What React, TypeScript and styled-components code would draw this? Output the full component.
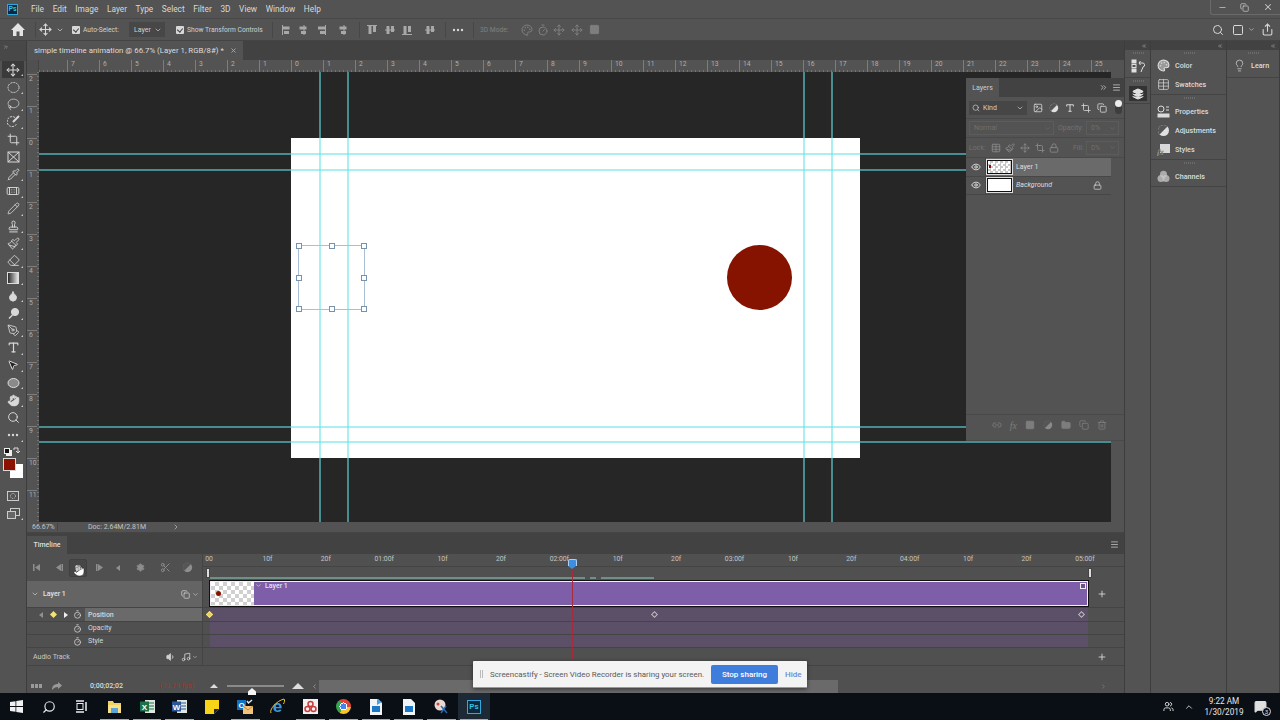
import React from 'react';
import styled, { createGlobalStyle } from 'styled-components';
import {
  Bandage, ChevronDown, ChevronLeft, ChevronRight, ChevronUp, ChevronsLeft, ChevronsRight, Crop, Droplet, Eraser,
  Eye, Folder, Hand, Lasso, Layers, Lightbulb, Link2, Lock, Menu, Move, Music, Palette, PenTool,
  Pencil, Pipette, Plus, Scissors, Search, Settings, Share, Square, Stamp, Table, Timer, Trash2,
  Type, Users, Volume1, X, Minus, Copy, MessageSquare, MousePointer2, Image as ImageIcon, Paintbrush,
} from 'lucide-react';

const GlobalStyle = createGlobalStyle`
  html, body { margin: 0; padding: 0; background: #535353; }
  * { box-sizing: border-box; }
  body { font-family: Roboto, "Liberation Sans", sans-serif; }
`;

const Page = styled.div`
  width: 1280px;
  height: 720px;
  display: flex;
  flex-direction: column;
  overflow: hidden;
  background: #535353;
  color: #d6d6d6;
`;

/* ---------- top bars ---------- */
const MenuBar = styled.div`
  height: 19px;
  display: flex;
  align-items: center;
  padding-left: 7px;
  background: #535353;
  border-bottom: 1px solid #484848;
  font-size: 8.3px;
  color: #d8d8d8;
`;
const PsMark = styled.div<{ $task?: boolean }>`
  width: ${({ $task }) => ($task ? 14 : 11)}px;
  height: ${({ $task }) => ($task ? 14 : 11)}px;
  margin-right: ${({ $task }) => ($task ? 0 : 13)}px;
  border: 1px solid #31a8e0;
  background: #0d2a3d;
  color: #31c5f0;
  font-size: ${({ $task }) => ($task ? 8 : 7)}px;
  line-height: ${({ $task }) => ($task ? 12 : 9)}px;
  text-align: center;
  font-weight: 600;
`;
const MenuItem = styled.span`
  margin-right: 8.6px;
`;
const WindowButtons = styled.div`
  margin-left: auto;
  width: 70px;
  height: 15px;
  align-self: flex-start;
  display: flex;
  align-items: center;
  justify-content: space-around;
  border: 1px solid #6a6a6a;
  border-top: 0;
  border-right: 0;
  border-bottom-left-radius: 3px;
  color: #c8c8c8;
`;
const OptionsBar = styled.div`
  height: 22px;
  display: flex;
  align-items: center;
  background: #535353;
  border-bottom: 1px solid #444;
  font-size: 6.7px;
  color: #d0d0d0;
`;
const HomeCell = styled.div`
  width: 35px;
  flex: none;
  display: flex;
  justify-content: center;
  color: #e4e4e4;
`;
const MoveCell = styled.div`
  width: 34px;
  flex: none;
  display: flex;
  align-items: center;
  color: #d8d8d8;
`;
const DimGroup = styled.div`
  display: flex;
  align-items: center;
  margin-left: 6px;
  opacity: 0.35;
`;
const OptSep = styled.div<{ $ml?: number }>`
  width: 1px;
  height: 16px;
  flex: none;
  margin-left: ${({ $ml }) => $ml || 0}px;
  background: #474747;
`;
const Check = styled.div<{ $ml: number }>`
  width: 8px;
  height: 8px;
  margin: 0 3px 0 ${({ $ml }) => $ml}px;
  border-radius: 1px;
  background: #d8d8d8;
  position: relative;
  &::after {
    content: '';
    position: absolute;
    left: 2px;
    top: 1px;
    width: 3px;
    height: 4px;
    border: solid #444;
    border-width: 0 1px 1px 0;
    transform: rotate(40deg);
  }
`;
const OptLabel = styled.span<{ $w: number }>`
  width: ${({ $w }) => $w}px;
  flex: none;
  white-space: nowrap;
`;
const LayerSelect = styled.div`
  width: 36px;
  height: 15px;
  margin-left: 10px;
  background: #474747;
  display: flex;
  align-items: center;
  justify-content: space-between;
  padding: 0 3px 0 5px;
  font-size: 7px;
`;
const IconSlot = styled.div<{ $ml?: number; $mr?: number; $color?: string }>`
  margin-left: ${({ $ml }) => $ml || 0}px;
  margin-right: ${({ $mr }) => $mr || 0}px;
  display: flex;
  flex: none;
  color: ${({ $color }) => $color || 'inherit'};
`;
const TopRight = styled.div`
  margin-left: auto;
  display: flex;
  align-items: center;
  gap: 8px;
  padding-right: 6px;
  color: #d8d8d8;
`;

/* ---------- workspace ---------- */
const Workspace = styled.div`
  flex: 1;
  display: flex;
  min-height: 0;
`;
const ToolColumn = styled.div`
  width: 27px;
  flex: none;
  display: flex;
  flex-direction: column;
  border-right: 1px solid #3d3d3d;
  background: #535353;
`;
const ToolHead = styled.div`
  height: 20px;
  flex: none;
  background: #484848;
  color: #aaa;
  padding: 3px 0 0 3px;
  display: flex;
  align-items: flex-start;
`;
const ToolBtn = styled.div<{ $active?: boolean; $more?: boolean }>`
  height: 17.4px;
  width: 22px;
  margin-left: 2px;
  flex: none;
  display: flex;
  align-items: center;
  justify-content: center;
  position: relative;
  color: #d8d8d8;
  background: ${({ $active }) => ($active ? '#3a3a3a' : 'transparent')};
  &::after {
    content: '';
    display: ${({ $more }) => ($more ? 'block' : 'none')};
    position: absolute;
    right: 1px;
    bottom: 2px;
    border-left: 2px solid transparent;
    border-bottom: 2px solid #ccc;
  }
`;
const DefaultsRow = styled.div`
  height: 13px;
  flex: none;
  display: flex;
  align-items: center;
  justify-content: space-between;
  padding: 0 5px 0 4px;
  margin-top: 1px;
`;
const MiniSwatch = styled.div`
  width: 6px;
  height: 6px;
  background: #111;
  border: 1px solid #eee;
  box-shadow: 2px 2px 0 #eee;
`;
const ColorStack = styled.div`
  height: 28px;
  flex: none;
  position: relative;
  margin-bottom: 2px;
`;
const ColorChip = styled.div<{ $fg?: boolean }>`
  position: absolute;
  left: ${({ $fg }) => ($fg ? 3 : 10)}px;
  top: ${({ $fg }) => ($fg ? 0 : 6)}px;
  width: 13px;
  height: ${({ $fg }) => ($fg ? 13 : 14)}px;
  background: ${({ $fg }) => ($fg ? '#8b1200' : '#fff')};
  border: 1px solid ${({ $fg }) => ($fg ? '#d8d8d8' : '#fff')};
  z-index: ${({ $fg }) => ($fg ? 2 : 1)};
`;
const Center = styled.div`
  flex: 1;
  min-width: 0;
  display: flex;
  flex-direction: column;
`;
const TabStrip = styled.div`
  height: 19px;
  flex: none;
  background: #424242;
  display: flex;
`;
const DocTab = styled.div`
  width: 216px;
  background: #535353;
  display: flex;
  align-items: center;
  padding-left: 7px;
  gap: 6px;
  font-size: 7.8px;
  color: #dcdcdc;
  white-space: nowrap;
`;
const RulerRow = styled.div`
  height: 12px;
  flex: none;
  display: flex;
`;
const RulerCorner = styled.div`
  width: 12px;
  flex: none;
  background: #505050;
  border-right: 1px solid #444;
`;
const HRail = styled.div`
  width: 1072px;
  flex: none;
  display: flex;
  overflow: hidden;
  padding-left: 28px;
  background-color: #535353;
  background-image: repeating-linear-gradient(90deg, #747474 0 1px, transparent 1px 4px);
  background-size: 100% 2px;
  background-position: 0 100%;
  background-repeat: no-repeat;
`;
const HCell = styled.div`
  width: 32px;
  flex: none;
  border-left: 1px solid #7d7d7d;
  padding-left: 3px;
  font-size: 6.8px;
  line-height: 9px;
  color: #aeaeae;
`;
const BodyRow = styled.div`
  height: 450px;
  flex: none;
  display: flex;
`;
const VRail = styled.div`
  width: 12px;
  flex: none;
  overflow: hidden;
  padding-top: 2px;
  background-color: #535353;
  background-image: repeating-linear-gradient(180deg, #747474 0 1px, transparent 1px 4px);
  background-size: 2px 100%;
  background-position: 100% 0;
  background-repeat: no-repeat;
`;
const VCell = styled.div`
  height: 32px;
  border-top: 1px solid #7d7d7d;
  padding: 1px 0 0 2px;
  width: 10px;
  font-size: 6.8px;
  line-height: 7px;
  color: #aeaeae;
  word-break: break-all;
`;
const Canvas = styled.div`
  width: 1072px;
  flex: none;
  position: relative;
  background: #262626;
  display: flex;
  align-items: center;
  justify-content: center;
  padding: 2px 0 0 1px;
`;
const Doc = styled.div`
  width: 569px;
  height: 320px;
  background: #fff;
  position: relative;
`;
const Ball = styled.div`
  position: absolute;
  left: 436px;
  top: 107px;
  width: 65px;
  height: 65px;
  border-radius: 50%;
  background: #861300;
`;
const SelectBox = styled.div`
  position: absolute;
  left: 7px;
  top: 107px;
  width: 67px;
  height: 65px;
  border: 1px solid #a9bfd6;
`;
const Handle = styled.div<{ $x: number; $y: number }>`
  position: absolute;
  left: ${({ $x }) => $x}%;
  top: ${({ $y }) => $y}%;
  width: 6px;
  height: 6px;
  margin: -3px;
  background: #fff;
  border: 1px solid #7592b0;
`;
const Guide = styled.div<{ $v?: boolean; $at: number }>`
  position: absolute;
  background: rgba(100, 225, 230, 0.55);
  ${({ $v, $at }) =>
    $v
      ? `left:${$at}px; top:0; bottom:0; width:2px;`
      : `top:${$at}px; left:0; right:0; height:2px;`}
`;
const ScrollGutter = styled.div`
  flex: 1;
  background: #535353;
`;
const StatusBar = styled.div`
  height: 11px;
  flex: none;
  display: flex;
  align-items: center;
  background: #535353;
  font-size: 7px;
  color: #c4c4c4;
  border-bottom: 1px solid #454545;
`;
const ZoomBox = styled.div`
  width: 31px;
  padding-left: 5px;
  border-right: 1px solid #454545;
  flex: none;
`;
const DocInfo = styled.div`
  margin-left: 30px;
  width: 84px;
  flex: none;
  white-space: nowrap;
`;

/* ---------- layers panel ---------- */
const LayersPanel = styled.div`
  position: absolute;
  left: 927px;
  top: 6px;
  width: 158px;
  height: 363px;
  display: flex;
  flex-direction: column;
  background: #535353;
  border-bottom: 1px solid #4a4a4a;
  z-index: 3;
  font-size: 7px;
  color: #d4d4d4;
`;
const PanelTabs = styled.div`
  height: 19px;
  flex: none;
  display: flex;
  align-items: center;
  background: #424242;
  color: #ccc;
  padding-right: 3px;
`;
const PanelTab = styled.div`
  width: 33px;
  height: 100%;
  background: #535353;
  margin-right: auto;
  display: flex;
  align-items: center;
  justify-content: center;
`;
const PanelRow = styled.div<{ $h: number; $line?: boolean }>`
  height: ${({ $h }) => $h}px;
  flex: none;
  display: flex;
  align-items: center;
  padding: 0 0 0 3px;
  border-bottom: ${({ $line }) => ($line ? '1px solid #494949' : '0')};
  color: #d0d0d0;
`;
const KindSelect = styled.div`
  width: 58px;
  height: 14px;
  flex: none;
  background: #464646;
  display: flex;
  align-items: center;
  gap: 3px;
  padding: 0 3px;
  margin-right: 3px;
`;
const KindChevron = styled(ChevronDown)`
  margin-left: auto;
`;
const FilterIcon = styled.div`
  width: 16px;
  flex: none;
  display: flex;
  justify-content: center;
  color: #d4d4d4;
`;
const ToggleSwitch = styled.div`
  width: 7px;
  height: 12px;
  border-radius: 4px;
  background: #3e3e3e;
  position: relative;
  &::after {
    content: '';
    position: absolute;
    left: 0;
    top: -2px;
    width: 7px;
    height: 7px;
    border-radius: 50%;
    background: #eee;
  }
`;
const DimField = styled.div<{ $w: number; $ml?: number }>`
  width: ${({ $w }) => $w}px;
  height: 14px;
  margin-left: ${({ $ml }) => $ml || 0}px;
  flex: none;
  border: 1px solid #5c5c5c;
  color: #6f6f6f;
  display: flex;
  align-items: center;
  justify-content: space-between;
  padding: 0 2px 0 4px;
`;
const DimText = styled.span<{ $w?: number; $ml?: number }>`
  color: #727272;
  width: ${({ $w }) => ($w ? `${$w}px` : 'auto')};
  flex: none;
  margin-left: ${({ $ml }) => $ml || 0}px;
`;
const FxMark = styled.span`
  color: #7d7d7d;
  font-style: italic;
  font-family: "Liberation Serif", serif;
  font-size: 10px;
`;
const LayerList = styled.div`
  flex: 1;
  width: 145px;
  display: flex;
  flex-direction: column;
`;
const LayerRow = styled.div<{ $active?: boolean }>`
  height: 18.5px;
  flex: none;
  display: flex;
  align-items: center;
  background: ${({ $active }) => ($active ? '#6a6a6a' : '#535353')};
  border-bottom: 1px solid #474747;
  font-size: 7px;
  color: #dedede;
`;
const EyeCell = styled.div`
  width: 20px;
  align-self: stretch;
  flex: none;
  background: #535353;
  border-right: 1px solid #474747;
  display: flex;
  align-items: center;
  justify-content: center;
  color: #e8e8e8;
`;
const LayerThumb = styled.div<{ $checker?: boolean }>`
  width: 25px;
  height: 14px;
  margin: 0 4px 0 1px;
  flex: none;
  border: 1px solid #111;
  outline: 1px solid #ddd;
  background-color: #fff;
  background-image: ${({ $checker }) =>
    $checker ? 'repeating-conic-gradient(#c8c8c8 0 25%, #fff 0 50%)' : 'none'};
  background-size: 5px 5px;
  display: flex;
  align-items: center;
  padding-left: 1px;
`;
const ThumbTick = styled.div`
  width: 2px;
  height: 3px;
  background: #8a1200;
`;
const LayerName = styled.span<{ $italic?: boolean }>`
  font-style: ${({ $italic }) => ($italic ? 'italic' : 'normal')};
`;
const LayerLock = styled.div`
  margin-left: auto;
  margin-right: 9px;
  display: flex;
  color: #d0d0d0;
`;
const PanelFoot = styled.div`
  height: 21px;
  flex: none;
  display: flex;
  align-items: center;
  justify-content: flex-end;
  gap: 8px;
  padding-right: 17px;
  color: #7d7d7d;
  border-top: 1px solid #494949;
  margin-bottom: 5px;
`;

/* ---------- right dock ---------- */
const Dock = styled.div`
  width: 156px;
  flex: none;
  display: flex;
  border-left: 1px solid #3d3d3d;
`;
const DockCol = styled.div<{ $w?: number }>`
  width: ${({ $w }) => ($w ? `${$w}px` : 'auto')};
  flex: ${({ $w }) => ($w ? 'none' : '1')};
  display: flex;
  flex-direction: column;
  border-right: 1px solid #3d3d3d;
`;
const DockHead = styled.div`
  height: 9px;
  flex: none;
  background: #424242;
  color: #bcbcbc;
  display: flex;
  justify-content: flex-end;
  align-items: center;
  padding-right: 3px;
`;
const DockGroup = styled.div<{ $h: number; $pt?: number }>`
  height: ${({ $h }) => $h}px;
  flex: none;
  padding-top: ${({ $pt }) => $pt ?? 6}px;
  border-bottom: 1px solid #444;
  position: relative;
  &::before {
    content: '';
    position: absolute;
    top: 2px;
    left: 50%;
    width: 11px;
    margin-left: -5px;
    height: 2px;
    background: repeating-linear-gradient(90deg, #6b6b6b 0 1px, transparent 1px 2px);
  }
`;
const DockEntry = styled.div<{ $pad?: number }>`
  height: 19px;
  display: flex;
  align-items: center;
  gap: 5px;
  padding-left: ${({ $pad }) => $pad ?? 6}px;
  font-size: 7.2px;
  font-weight: 500;
  color: #dcdcdc;
`;
const DockIcon = styled.div<{ $active?: boolean }>`
  width: 18px;
  height: 15px;
  margin: 2px auto 0;
  display: flex;
  align-items: center;
  justify-content: center;
  color: #e0e0e0;
  background: ${({ $active }) => ($active ? '#333' : 'transparent')};
`;

/* ---------- timeline ---------- */
const Timeline = styled.div`
  flex: 1;
  display: flex;
  flex-direction: column;
  min-height: 0;
  background: #505050;
  font-size: 7px;
`;
const TimelineHead = styled.div`
  height: 21px;
  flex: none;
  display: flex;
  align-items: flex-end;
  justify-content: space-between;
  background: #424242;
  padding-right: 5px;
  color: #c8c8c8;
`;
const TimelineTab = styled.div`
  width: 40px;
  height: 18px;
  background: #505050;
  display: flex;
  align-items: center;
  justify-content: center;
  font-weight: 500;
  color: #dedede;
`;
const HeadMenu = styled(Menu)`
  margin-bottom: 5px;
`;
const TimelineBody = styled.div`
  flex: 1;
  position: relative;
  display: flex;
  flex-direction: column;
`;
const TLRow = styled.div<{ $h: number; $line?: boolean }>`
  height: ${({ $h }) => $h}px;
  flex: none;
  display: flex;
  border-bottom: ${({ $line }) => ($line ? '1px solid #444' : '0')};
`;
const TLLeft = styled.div<{ $bg?: string }>`
  width: 176px;
  flex: none;
  display: flex;
  align-items: center;
  background: ${({ $bg }) => $bg || '#505050'};
  border-right: 1px solid #444;
  color: #d0d0d0;
`;
const TLRight = styled.div`
  flex: 1;
  min-width: 0;
  display: flex;
  align-items: stretch;
  padding-left: 7px;
`;
const Transport = styled.div<{ $x: number; $active?: boolean }>`
  width: ${({ $active }) => ($active ? 18 : 14)}px;
  height: ${({ $active }) => ($active ? 18 : 14)}px;
  margin-left: ${({ $x }) => $x}px;
  flex: none;
  display: flex;
  align-items: center;
  justify-content: center;
  color: ${({ $active }) => ($active ? '#e4e4e4' : '#8e8e8e')};
  background: ${({ $active }) => ($active ? '#474747' : 'transparent')};
  border: ${({ $active }) => ($active ? '1px solid #404040' : '0')};
  border-radius: 2px;
`;
const FrameArea = styled.div`
  flex: 1;
  padding-left: 6px;
  display: flex;
  flex-direction: column;
  min-width: 0;
`;
const FrameLabels = styled.div`
  height: 13px;
  display: flex;
  border-bottom: 1px solid #444;
  margin-left: -6px;
  padding-left: 6px;
`;
const FrameCell = styled.div`
  width: 58.4px;
  flex: none;
  color: #c4c4c4;
  font-size: 6.8px;
  line-height: 11px;
  white-space: nowrap;
  & > span {
    display: inline-block;
    transform: translateX(-50%);
  }
`;
const WorkArea = styled.div`
  flex: 1;
  position: relative;
  display: flex;
  align-items: flex-end;
  padding: 0 0 2px 1px;
  gap: 5px;
`;
const WorkBar = styled.div<{ $w: number }>`
  width: ${({ $w }) => $w}px;
  height: 2px;
  background: #6f9088;
`;
const WorkKnob = styled.div<{ $right?: boolean }>`
  position: absolute;
  top: 1px;
  ${({ $right }) => ($right ? 'left: 879px;' : 'left: -3px;')}
  width: 4px;
  height: 10px;
  background: #ddd;
  border: 1px solid #444;
`;
const LayerTitle = styled.span`
  font-weight: 500;
  margin-left: 4px;
  color: #e2e2e2;
  margin-right: auto;
`;
const Clip = styled.div`
  width: 878px;
  height: 25px;
  margin-top: -0.5px;
  display: flex;
  background: #7e5da9;
  border: 1px solid #f2eef7;
  outline: 1px solid #111;
  position: relative;
`;
const ClipThumb = styled.div`
  width: 43px;
  flex: none;
  background-color: #fff;
  background-image: repeating-conic-gradient(#d0d0d0 0 25%, #fff 0 50%);
  background-size: 8px 8px;
  display: flex;
  align-items: center;
  padding-left: 5px;
`;
const ThumbDot = styled.div`
  width: 5px;
  height: 5px;
  border-radius: 50%;
  background: #861300;
`;
const ClipLabel = styled.div`
  display: flex;
  align-items: flex-start;
  gap: 3px;
  padding: 0 0 0 1px;
  font-weight: 500;
  color: #e6e0ee;
`;
const ClipEnd = styled.div`
  position: absolute;
  right: 1px;
  top: 1px;
  width: 6px;
  height: 6px;
  border: 1px solid #eee;
  background: #6b4f90;
`;
const PlusCell = styled.div`
  width: 27px;
  flex: none;
  display: flex;
  align-items: center;
  justify-content: center;
  color: #e0e0e0;
`;
const Lane = styled.div<{ $blank?: boolean }>`
  width: 878px;
  flex: none;
  position: relative;
  background: ${({ $blank }) => ($blank ? 'transparent' : '#5c5068')};
`;
const Diamond = styled.div<{ $x: number; $hollow?: boolean }>`
  position: absolute;
  left: ${({ $x }) => $x}px;
  top: 50%;
  width: 5px;
  height: 5px;
  margin: -3px;
  transform: rotate(45deg);
  background: ${({ $hollow }) => ($hollow ? 'transparent' : '#e6cf5c')};
  border: 1px solid ${({ $hollow }) => ($hollow ? '#bbb' : '#f0e080')};
`;
const PropIcons = styled.div`
  width: 58px;
  flex: none;
  display: flex;
  align-items: center;
  justify-content: flex-end;
  gap: 8px;
  padding-right: 3px;
  color: #d8d8d8;
`;
const PropLabel = styled.div<{ $on?: boolean }>`
  flex: 1;
  align-self: stretch;
  display: flex;
  align-items: center;
  padding-left: 3px;
  background: ${({ $on }) => ($on ? '#6a6a6a' : 'transparent')};
  font-weight: ${({ $on }) => ($on ? 500 : 400)};
  color: #d8d8d8;
  font-size: 7px;
`;
const SmallArrow = styled.div<{ $dir: 'l' | 'r'; $dim?: boolean }>`
  width: 0;
  height: 0;
  border-top: 3px solid transparent;
  border-bottom: 3px solid transparent;
  ${({ $dir, $dim }) =>
    $dir === 'l'
      ? `border-right: 4px solid ${$dim ? '#909090' : '#eee'};`
      : `border-left: 4px solid ${$dim ? '#909090' : '#eee'};`}
`;
const YellowDot = styled.div`
  width: 5px;
  height: 5px;
  transform: rotate(45deg);
  background: #efe27c;
`;
const AudioLabel = styled.span`
  margin: 0 auto 0 6px;
  color: #c8c8c8;
`;
const AudioIcons = styled.div`
  display: flex;
  align-items: center;
  gap: 5px;
  padding-right: 4px;
`;
const Playhead = styled.div`
  position: absolute;
  left: 545px;
  top: 7px;
  width: 1px;
  height: 99px;
  background: #a52c3c;
  z-index: 2;
`;
const PlayKnob = styled.div`
  position: absolute;
  left: -4px;
  top: -2px;
  width: 9px;
  height: 7px;
  border-radius: 2px 2px 0 0;
  background: #3f8fe0;
  border: 1px solid #a9d0f5;
  border-bottom: 0;
  &::after {
    content: '';
    position: absolute;
    left: -1px;
    top: 6px;
    border-left: 4.5px solid transparent;
    border-right: 4.5px solid transparent;
    border-top: 3px solid #3f8fe0;
  }
`;
const CursorHand = styled.div`
  position: absolute;
  left: 46px;
  top: 11px;
  display: flex;
  color: #222;
  z-index: 4;
`;
const BottomBar = styled.div`
  height: 14px;
  flex: none;
  display: flex;
  align-items: center;
  color: #b8b8b8;
`;
const Squares = styled.div`
  width: 12px;
  height: 4px;
  margin-left: 4px;
  background: repeating-linear-gradient(90deg, #9a9a9a 0 3px, #505050 3px 4px);
`;
const TimeCode = styled.span`
  margin-left: 28px;
  width: 36px;
  flex: none;
  font-weight: 500;
  color: #dadada;
  white-space: nowrap;
`;
const FpsText = styled.span`
  margin-left: 34px;
  width: 34px;
  flex: none;
  color: #a83030;
  white-space: nowrap;
`;
const Mountain = styled.div<{ $w: number; $ml: number }>`
  margin-left: ${({ $ml }) => $ml}px;
  width: 0;
  height: 0;
  flex: none;
  border-left: ${({ $w }) => $w / 2}px solid transparent;
  border-right: ${({ $w }) => $w / 2}px solid transparent;
  border-bottom: ${({ $w }) => $w / 2}px solid #ddd;
`;
const ZoomTrack = styled.div`
  width: 57px;
  height: 2px;
  flex: none;
  margin-left: 9.5px;
  background: #8a8a8a;
  position: relative;
`;
const ZoomThumb = styled.div`
  position: absolute;
  left: 21px;
  top: 3px;
  width: 8px;
  height: 7px;
  background: #f4f4f4;
  clip-path: polygon(50% 0, 100% 50%, 100% 100%, 0 100%, 0 50%);
`;
const HScroll = styled.div`
  width: 519px;
  height: 13px;
  flex: none;
  margin-left: 1.5px;
  background: #6a6a6a;
`;
const ScrollEnd = styled.div`
  margin-left: auto;
  margin-right: 17px;
  display: flex;
  color: #888;
`;

/* ---------- toast ---------- */
const Toast = styled.div`
  position: absolute;
  left: 473px;
  top: 661px;
  width: 334px;
  height: 27px;
  display: flex;
  align-items: center;
  background: #f3f3f3;
  border-bottom: 1px solid #999;
  box-shadow: 0 1px 4px rgba(0, 0, 0, 0.5);
  border-radius: 1px;
  font-size: 7.9px;
  color: #5a5a5a;
  z-index: 10;
  white-space: nowrap;
`;
const Grip = styled.div`
  width: 3px;
  height: 8px;
  margin: 0 7px 0 7px;
  border: solid #bbb;
  border-width: 0 1px;
`;
const ToastText = styled.span`
  width: 214px;
  flex: none;
`;
const StopBtn = styled.div`
  width: 67px;
  height: 19px;
  margin-left: 7px;
  flex: none;
  background: #3e7ddb;
  border-radius: 2px;
  color: #fff;
  font-size: 8px;
  font-weight: 500;
  display: flex;
  align-items: center;
  justify-content: center;
`;
const HideLink = styled.span`
  margin-left: 7px;
  color: #6a8bd0;
  font-size: 8px;
  font-weight: 500;
`;

/* ---------- taskbar ---------- */
const Taskbar = styled.div`
  height: 27px;
  flex: none;
  display: flex;
  align-items: center;
  background: #0a0e15;
  color: #e8e8e8;
`;
const TaskSlot = styled.div<{ $running?: boolean; $active?: boolean }>`
  width: 32.7px;
  height: 100%;
  flex: none;
  position: relative;
  display: flex;
  align-items: center;
  justify-content: center;
  background: ${({ $active }) => ($active ? '#1d2a36' : 'transparent')};
  &::after {
    content: '';
    display: ${({ $running }) => ($running ? 'block' : 'none')};
    position: absolute;
    left: 2px;
    right: 2px;
    bottom: 0;
    height: 1.5px;
    background: #7fb4de;
  }
`;
const TaskSearch = styled(Search)`
  transform: scaleX(-1);
`;
const Tray = styled.div`
  margin-left: auto;
  display: flex;
  align-items: center;
  padding-right: 13px;
  color: #e0e0e0;
`;
const Clock = styled.div`
  width: 44px;
  margin-left: 8px;
  text-align: center;
  font-size: 8.2px;
  line-height: 11px;
  color: #e6e6e6;
  white-space: nowrap;
`;
const Notify = styled.div`
  position: relative;
  display: flex;
  margin-left: 8px;
`;
const NotifyBadge = styled.div`
  position: absolute;
  right: -4px;
  bottom: -3px;
  width: 9px;
  height: 9px;
  border-radius: 50%;
  background: #0a0e15;
  border: 1px solid #ddd;
  font-size: 6px;
  line-height: 7px;
  text-align: center;
`;
const ChromeBall = styled.div`
  width: 15px;
  height: 15px;
  border-radius: 50%;
  background:
    radial-gradient(circle, #3f86ee 0 3px, #fff 3px 4px, transparent 4px),
    conic-gradient(from 330deg, #dd4436 0 120deg, #f7c42e 120deg 240deg, #37a54f 240deg 360deg);
`;

/* ---------- drawn icons ---------- */
const HomeGlyph = () => (
  <svg width="14" height="13" viewBox="0 0 14 13" fill="currentColor">
    <path d="M7 0 0 7h2v6h3.500V8.500h3V13H12V7h2z" />
  </svg>
);
const AlignGlyph = ({ kind }: { kind: number }) => (
  <svg width="12" height="12" viewBox="0 0 12 12" fill="#a8a8a8">
    {kind < 4 ? (
      <>
        <rect x={kind === 0 ? 1 : kind === 1 ? 5.5 : 10} y="1" width="1" height="10" />
        <rect x={kind === 2 ? 3 : 1.5} y="2.5" width="7" height="3" />
        <rect x={kind === 2 ? 5 : 3} y="7" width="5" height="3" />
      </>
    ) : (
      <>
        <rect x="1" y={kind === 4 ? 1 : kind === 5 ? 5.5 : 10} width="10" height="1" />
        <rect x="2.5" y="2" width="3" height="8" />
        <rect x="7" y="2" width="3" height="6" />
      </>
    )}
  </svg>
);
const DashedCircle = () => (
  <svg width="13" height="13" viewBox="0 0 13 13" fill="none" stroke="currentColor" strokeDasharray="2 1">
    <ellipse cx="6.5" cy="6.5" rx="5.5" ry="5" />
  </svg>
);
const QuickSelect = () => (
  <svg width="13" height="13" viewBox="0 0 13 13" fill="none" stroke="currentColor">
    <path d="M8 2.5A5 5 0 1 0 9.5 9" strokeDasharray="2 1" />
    <path d="M12 1 6 7" strokeWidth="2" />
  </svg>
);
const FrameTool = () => (
  <svg width="13" height="12" viewBox="0 0 13 12" fill="none" stroke="currentColor">
    <rect x="1" y="1" width="11" height="10" />
    <path d="M1 1l11 10M12 1 1 11" />
  </svg>
);
const GradientTool = () => (
  <svg width="12" height="12" viewBox="0 0 12 12">
    <defs>
      <linearGradient id="toolGrad">
        <stop offset="0" stopColor="#222" />
        <stop offset="1" stopColor="#eee" />
      </linearGradient>
    </defs>
    <rect x=".5" y=".5" width="11" height="11" fill="url(#toolGrad)" stroke="#ddd" />
  </svg>
);
const DodgeTool = () => (
  <svg width="13" height="13" viewBox="0 0 13 13" fill="currentColor" stroke="currentColor">
    <circle cx="8" cy="5" r="3.6" />
    <path d="M5.5 8 2 11.5" strokeWidth="1.5" />
  </svg>
);
const ShapeTool = () => (
  <svg width="13" height="12" viewBox="0 0 13 12" fill="#8a8a8a" stroke="#ddd">
    <ellipse cx="6.5" cy="6" rx="5.5" ry="4.5" />
  </svg>
);
const Dots = () => (
  <svg width="12" height="4" viewBox="0 0 12 4" fill="currentColor">
    <circle cx="2" cy="2" r="1.2" />
    <circle cx="6" cy="2" r="1.2" />
    <circle cx="10" cy="2" r="1.2" />
  </svg>
);
const HistoryIcon = () => (
  <svg width="14" height="14" viewBox="0 0 14 14" fill="none" stroke="currentColor">
    <rect x="1" y="1" width="4" height="3" fill="currentColor" />
    <rect x="1" y="5.5" width="4" height="3" />
    <rect x="1" y="10" width="4" height="3" fill="currentColor" />
    <path d="M8 4h3a2 2 0 0 1 1 4l-2 5M9.5 2 8 4l1.500 2" />
  </svg>
);
const SwatchIcon = () => <Table size={13} strokeWidth={1.3} />;
const PropertiesIcon = () => (
  <svg width="13" height="13" viewBox="0 0 13 13" fill="none" stroke="currentColor">
    <circle cx="4" cy="4" r="3" />
    <path d="M9 2h3M9 5h3" />
    <rect x="1" y="9" width="11" height="3" fill="currentColor" />
  </svg>
);
const AdjustIcon = ({ size = 13, light = '#e0e0e0' }: { size?: number; light?: string }) => (
  <svg width={size} height={size} viewBox="0 0 13 13">
    <circle cx="6.5" cy="6.5" r="5.5" fill={light} />
    <path d="M10.400 2.600A5.500 5.500 0 0 0 2.600 10.400z" fill="#555" />
  </svg>
);
const ChannelsIcon = () => (
  <svg width="13" height="13" viewBox="0 0 13 13" fill="#c8c8c8" fillOpacity=".75">
    <circle cx="6.500" cy="4.200" r="3.500" />
    <circle cx="4" cy="8.500" r="3.500" />
    <circle cx="9" cy="8.500" r="3.500" />
  </svg>
);
const StylesIcon = () => (
  <svg width="13" height="13" viewBox="0 0 13 13">
    <rect x="3" y="1" width="10" height="9" fill="#d8d8d8" />
    <text x="0" y="12" fontSize="9" fontStyle="italic" fontFamily="Liberation Serif, serif" fill="#fff" stroke="#333" strokeWidth=".3">
      fx
    </text>
  </svg>
);
const StepGlyph = ({ dir, bar }: { dir: 'l' | 'r'; bar: 'l' | 'r' }) => (
  <svg width="9" height="7" viewBox="0 0 9 7" fill="currentColor">
    <rect x={bar === 'l' ? 0 : 7.5} y="0" width="1.500" height="7" />
    <path d={dir === 'l' ? 'M7 0v7L2 3.500z' : 'M2 0v7l5-3.500z'} />
  </svg>
);
const WindowsLogo = () => (
  <svg width="13" height="13" viewBox="0 0 13 13" fill="#f0f0f0">
    <path d="M0 2l5.500-.8V6H0zM6.300 1.100 13 0v6H6.300zM0 7h5.500v4.800L0 11zM6.300 7H13v6l-6.700-1z" />
  </svg>
);
const TaskView = () => (
  <svg width="13" height="13" viewBox="0 0 13 13" fill="none" stroke="#eee">
    <rect x="2" y="3.500" width="6" height="6" />
    <path d="M1 1h8M1 12h8M11 2v9" strokeWidth="1.500" />
  </svg>
);
const Explorer = () => (
  <svg width="15" height="15" viewBox="0 0 15 15">
    <path d="M1 2h5l1 2h7v10H1z" fill="#f2cf63" />
    <rect x="1" y="6" width="13" height="8" fill="#f7e08d" />
    <rect x="4" y="9" width="7" height="5" fill="#5aa6d8" />
  </svg>
);
const OfficeTile = ({ bg, letter }: { bg: string; letter: string }) => (
  <svg width="15" height="15" viewBox="0 0 15 15">
    <rect x="5" y="1" width="10" height="13" fill="#dfe7e3" />
    <path d="M9 4h5M9 7h5M9 10h5" stroke={bg} />
    <rect x="0" y="2.500" width="9" height="10" fill={bg} />
    <text x="4.500" y="10.500" fontSize="8" fontWeight="700" fontFamily="Liberation Sans, sans-serif" fill="#fff" textAnchor="middle">
      {letter}
    </text>
  </svg>
);
const Sticky = () => (
  <svg width="14" height="14" viewBox="0 0 14 14">
    <path d="M0 0h14v9l-5 5H0z" fill="#f7d417" />
    <path d="M9 14V9h5z" fill="#222" />
  </svg>
);
const Outlook = () => (
  <svg width="16" height="16" viewBox="0 0 16 16">
    <rect x="0" y="1" width="9" height="10" fill="#0e72c4" />
    <text x="4.500" y="9" fontSize="8" fontWeight="700" fontFamily="Liberation Sans, sans-serif" fill="#fff" textAnchor="middle">
      O
    </text>
    <rect x="6" y="7" width="10" height="8" fill="#f0c27a" />
    <path d="M6 7l5 4 5-4" fill="none" stroke="#b98640" />
    <path d="M10 2l1.500 2L15 1" fill="none" stroke="#dbe8f3" strokeWidth="1.500" />
  </svg>
);
const IeLogo = () => (
  <svg width="17" height="17" viewBox="0 0 17 17">
    <text x="8.500" y="14" fontSize="17" fontWeight="700" fontFamily="Liberation Sans, sans-serif" fill="#3a9be0" textAnchor="middle">
      e
    </text>
    <path d="M2 15C0 12 7 3 15 1c1 1 .5 3-.5 5" fill="none" stroke="#f0c030" strokeWidth="1" />
  </svg>
);
const RedApp = () => (
  <svg width="15" height="15" viewBox="0 0 15 15">
    <rect width="15" height="15" fill="#f4f0ee" />
    <circle cx="7.500" cy="5" r="2.500" fill="none" stroke="#c83c3c" strokeWidth="1.500" />
    <circle cx="4.500" cy="10" r="2.500" fill="none" stroke="#c83c3c" strokeWidth="1.500" />
    <circle cx="10.500" cy="10" r="2.500" fill="none" stroke="#c83c3c" strokeWidth="1.500" />
  </svg>
);
const DocFile = ({ arrow }: { arrow?: boolean }) => (
  <svg width="14" height="16" viewBox="0 0 14 16">
    <path d="M1 0h8l4 4v12H1z" fill="#f2f5f8" />
    <rect x="3" y="7" width="8" height="6" fill="#1c78c8" />
    {arrow && <path d="M8 0l5 3-5 3z" fill="#4aa0e0" />}
  </svg>
);
const Snip = () => (
  <svg width="16" height="16" viewBox="0 0 16 16">
    <circle cx="7" cy="6" r="5.500" fill="#e8d8d0" />
    <circle cx="5" cy="5" r="1.500" fill="#c84a3c" />
    <path d="M8 7l6 7M13 7l-5 7" stroke="#2a6ab0" strokeWidth="1.500" />
  </svg>
);

const tools: { icon: React.ReactNode; more?: boolean; active?: boolean }[] = [
  { icon: <Move size={14} strokeWidth={1.8} />, more: true, active: true },
  { icon: <DashedCircle />, more: true },
  { icon: <Lasso size={13} strokeWidth={1.3} />, more: true },
  { icon: <QuickSelect />, more: true },
  { icon: <Crop size={13} strokeWidth={1.8} /> },
  { icon: <FrameTool /> },
  { icon: <Pipette size={13} strokeWidth={1.6} />, more: true },
  { icon: <Bandage size={14} strokeWidth={1.6} />, more: true },
  { icon: <Pencil size={13} strokeWidth={1.5} />, more: true },
  { icon: <Stamp size={13} strokeWidth={1.8} />, more: true },
  { icon: <Paintbrush size={13} strokeWidth={1.6} />, more: true },
  { icon: <Eraser size={13} strokeWidth={1.6} />, more: true },
  { icon: <GradientTool />, more: true },
  { icon: <Droplet size={12} fill="currentColor" />, more: true },
  { icon: <DodgeTool />, more: true },
  { icon: <PenTool size={13} strokeWidth={1.5} />, more: true },
  { icon: <Type size={13} strokeWidth={2.2} />, more: true },
  { icon: <MousePointer2 size={12} fill="#222" />, more: true },
  { icon: <ShapeTool />, more: true },
  { icon: <Hand size={13} fill="currentColor" strokeWidth={1} />, more: true },
  { icon: <Search size={13} strokeWidth={1.8} /> },
  { icon: <Dots />, more: true },
];

const hRuler = ['7', '6', '5', '4', '3', '2', '1', '0', ...Array.from({ length: 25 }, (_, i) => String(i + 1))];
const vRuler = ['2', '1', '0', '1', '2', '3', '4', '5', '6', '7', '8', '9', '10', '11'];
const frames = ['00', '10f', '20f', '01:00f', '10f', '20f', '02:00f', '10f', '20f', '03:00f', '10f', '20f', '04:00f', '10f', '20f', '05:00f'];
const menus = ['File', 'Edit', 'Image', 'Layer', 'Type', 'Select', 'Filter', '3D', 'View', 'Window', 'Help'];
const handles = [[0, 0], [50, 0], [100, 0], [0, 50], [100, 50], [0, 100], [50, 100], [100, 100]];
const vGuides = [280, 308, 764, 792];
const hGuides = [81, 97, 354, 369];

export default function App() {
  return (
    <Page>
      <GlobalStyle />
      <MenuBar>
        <PsMark>Ps</PsMark>
        {menus.map((m) => (
          <MenuItem key={m}>{m}</MenuItem>
        ))}
        <WindowButtons>
          <Minus size={9} />
          <Copy size={9} />
          <X size={10} strokeWidth={2.5} />
        </WindowButtons>
      </MenuBar>

      <OptionsBar>
        <HomeCell><HomeGlyph /></HomeCell>
        <OptSep />
        <MoveCell>
          <IconSlot $ml={3}><Move size={13} /></IconSlot>
          <IconSlot $ml={4}><ChevronDown size={8} /></IconSlot>
        </MoveCell>
        <Check $ml={2} />
        <OptLabel $w={36}>Auto-Select:</OptLabel>
        <LayerSelect>
          Layer
          <ChevronDown size={8} />
        </LayerSelect>
        <Check $ml={11} />
        <OptLabel $w={78}>Show Transform Controls</OptLabel>
        <OptSep $ml={7} />
        <IconSlot $ml={8}><AlignGlyph kind={0} /></IconSlot>
        <IconSlot $ml={5}><AlignGlyph kind={1} /></IconSlot>
        <IconSlot $ml={5}><AlignGlyph kind={2} /></IconSlot>
        <IconSlot $ml={11}><AlignGlyph kind={1} /></IconSlot>
        <OptSep $ml={9} />
        <IconSlot $ml={6}><AlignGlyph kind={4} /></IconSlot>
        <IconSlot $ml={6}><AlignGlyph kind={5} /></IconSlot>
        <IconSlot $ml={5}><AlignGlyph kind={6} /></IconSlot>
        <IconSlot $ml={11}><AlignGlyph kind={5} /></IconSlot>
        <OptSep $ml={9} />
        <IconSlot $ml={6} $color="#d8d8d8"><Dots /></IconSlot>
        <OptSep $ml={9} />
        <DimGroup>
          <OptLabel $w={28}>3D Mode:</OptLabel>
          <IconSlot $ml={13}><Palette size={12} /></IconSlot>
          <IconSlot $ml={4}><Timer size={12} /></IconSlot>
          <IconSlot $ml={4}><Move size={12} /></IconSlot>
          <IconSlot $ml={6}><Move size={12} /></IconSlot>
          <IconSlot $ml={6}><Square size={11} fill="currentColor" /></IconSlot>
        </DimGroup>
        <TopRight>
          <Search size={12} />
          <Square size={12} />
          <IconSlot $ml={-4} $mr={-2}><ChevronDown size={7} /></IconSlot>
          <Share size={13} />
        </TopRight>
      </OptionsBar>

      <Workspace>
        <ToolColumn>
          <ToolHead>
            <ChevronsRight size={6} />
          </ToolHead>
          {tools.map((t, i) => (
            <ToolBtn key={i} $active={t.active} $more={t.more}>
              {t.icon}
            </ToolBtn>
          ))}
          <DefaultsRow>
            <MiniSwatch />
            <svg width="8" height="8" viewBox="0 0 8 8" fill="none" stroke="#ddd">
              <path d="M1 3V1h4v5M3 4l2 2 2-2" />
            </svg>
          </DefaultsRow>
          <ColorStack>
            <ColorChip $fg />
            <ColorChip />
          </ColorStack>
          <ToolBtn>
            <svg width="12" height="10" viewBox="0 0 12 10" fill="none" stroke="#ccc">
              <rect x=".5" y=".5" width="11" height="9" />
              <circle cx="6" cy="5" r="2.500" strokeDasharray="1 1" />
            </svg>
          </ToolBtn>
          <ToolBtn $more>
            <svg width="13" height="11" viewBox="0 0 13 11" fill="none" stroke="#ccc">
              <rect x="3.500" y=".5" width="9" height="7" />
              <rect x=".5" y="3.500" width="8" height="7" fill="#666" />
            </svg>
          </ToolBtn>
        </ToolColumn>

        <Center>
          <TabStrip>
            <DocTab>
              simple timeline animation @ 66.7% (Layer 1, RGB/8#) *
              <X size={7} strokeWidth={3} color="#aaa" />
            </DocTab>
          </TabStrip>
          <RulerRow>
            <RulerCorner />
            <HRail>
              {hRuler.map((n, i) => (
                <HCell key={i}>{n}</HCell>
              ))}
            </HRail>
            <ScrollGutter />
          </RulerRow>
          <BodyRow>
            <VRail>
              {vRuler.map((n, i) => (
                <VCell key={i}>{n}</VCell>
              ))}
            </VRail>
            <Canvas>
              <Doc>
                <Ball />
                <SelectBox>
                  {handles.map(([x, y]) => (
                    <Handle key={`${x}-${y}`} $x={x} $y={y} />
                  ))}
                </SelectBox>
              </Doc>
              {vGuides.map((g) => (
                <Guide key={g} $v $at={g} />
              ))}
              {hGuides.map((g) => (
                <Guide key={g} $at={g} />
              ))}
              <LayersPanel>
                <PanelTabs>
                  <PanelTab>Layers</PanelTab>
                  <ChevronsRight size={9} />
                  <IconSlot $ml={4}><Menu size={9} /></IconSlot>
                </PanelTabs>
                <PanelRow $h={22} $line>
                  <KindSelect>
                    <Search size={8} />
                    Kind
                    <KindChevron size={8} />
                  </KindSelect>
                  <FilterIcon><ImageIcon size={10} /></FilterIcon>
                  <FilterIcon><AdjustIcon size={10} /></FilterIcon>
                  <FilterIcon><Type size={10} strokeWidth={2.5} /></FilterIcon>
                  <FilterIcon><Crop size={10} /></FilterIcon>
                  <FilterIcon><Copy size={10} /></FilterIcon>
                  <FilterIcon><ToggleSwitch /></FilterIcon>
                </PanelRow>
                <PanelRow $h={19} $line>
                  <DimField $w={85}>
                    Normal
                    <ChevronDown size={7} />
                  </DimField>
                  <DimText $w={26} $ml={4}>Opacity:</DimText>
                  <DimField $w={33} $ml={2}>
                    0%
                    <ChevronDown size={7} />
                  </DimField>
                </PanelRow>
                <PanelRow $h={20} $line>
                  <DimText $w={22}>Lock:</DimText>
                  <IconSlot $ml={0} $color="#8a8a8a"><Table size={10} /></IconSlot>
                  <IconSlot $ml={4} $color="#8a8a8a"><Paintbrush size={10} /></IconSlot>
                  <IconSlot $ml={5} $color="#8a8a8a"><Move size={10} /></IconSlot>
                  <IconSlot $ml={5} $color="#8a8a8a"><Crop size={10} /></IconSlot>
                  <IconSlot $ml={4} $color="#8a8a8a"><Lock size={10} /></IconSlot>
                  <DimText $w={13} $ml={14}>Fill:</DimText>
                  <DimField $w={33}>
                    0%
                    <ChevronDown size={7} />
                  </DimField>
                </PanelRow>
                <LayerList>
                  <LayerRow $active>
                    <EyeCell><Eye size={10} strokeWidth={2} /></EyeCell>
                    <LayerThumb $checker><ThumbTick /></LayerThumb>
                    <LayerName>Layer 1</LayerName>
                  </LayerRow>
                  <LayerRow>
                    <EyeCell><Eye size={10} strokeWidth={2} /></EyeCell>
                    <LayerThumb />
                    <LayerName $italic>Background</LayerName>
                    <LayerLock><Lock size={9} /></LayerLock>
                  </LayerRow>
                </LayerList>
                <PanelFoot>
                  <Link2 size={10} />
                  <FxMark>fx</FxMark>
                  <Square size={10} fill="currentColor" />
                  <AdjustIcon size={10} light="#8a8a8a" />
                  <Folder size={10} fill="currentColor" />
                  <Copy size={10} />
                  <Trash2 size={10} />
                </PanelFoot>
              </LayersPanel>
            </Canvas>
            <ScrollGutter />
          </BodyRow>
          <StatusBar>
            <ZoomBox>66.67%</ZoomBox>
            <DocInfo>Doc: 2.64M/2.81M</DocInfo>
            <ChevronRight size={8} />
          </StatusBar>

          <Timeline>
            <TimelineHead>
              <TimelineTab>Timeline</TimelineTab>
              <HeadMenu size={9} />
            </TimelineHead>
            <TimelineBody>
              <TLRow $h={27}>
                <TLLeft>
                  <Transport $x={3}><StepGlyph dir="l" bar="l" /></Transport>
                  <Transport $x={7}><StepGlyph dir="l" bar="r" /></Transport>
                  <Transport $x={4} $active><Square size={6} fill="currentColor" /></Transport>
                  <Transport $x={6}><StepGlyph dir="r" bar="l" /></Transport>
                  <Transport $x={4}><SmallArrow $dir="l" $dim /></Transport>
                  <Transport $x={8}><Settings size={9} fill="currentColor" /></Transport>
                  <Transport $x={11}><Scissors size={11} /></Transport>
                  <Transport $x={8}><AdjustIcon size={11} light="#8e8e8e" /></Transport>
                </TLLeft>
                <FrameArea>
                  <FrameLabels>
                    {frames.map((f, i) => (
                      <FrameCell key={i}>
                        <span>{f}</span>
                      </FrameCell>
                    ))}
                  </FrameLabels>
                  <WorkArea>
                    <WorkKnob />
                    <WorkBar $w={375} />
                    <WorkBar $w={6} />
                    <WorkBar $w={53} />
                    <WorkKnob $right />
                  </WorkArea>
                </FrameArea>
              </TLRow>
              <TLRow $h={27} $line>
                <TLLeft $bg="#646464">
                  <IconSlot $ml={4}><ChevronDown size={8} /></IconSlot>
                  <LayerTitle>Layer 1</LayerTitle>
                  <Copy size={9} />
                  <IconSlot $ml={2} $mr={3}><ChevronDown size={7} /></IconSlot>
                </TLLeft>
                <TLRight>
                  <Clip>
                    <ClipThumb><ThumbDot /></ClipThumb>
                    <ClipLabel>
                      <ChevronDown size={7} />
                      Layer 1
                    </ClipLabel>
                    <ClipEnd />
                  </Clip>
                  <PlusCell><Plus size={10} strokeWidth={2} /></PlusCell>
                </TLRight>
              </TLRow>
              <TLRow $h={14} $line>
                <TLLeft>
                  <PropIcons>
                    <SmallArrow $dir="l" $dim />
                    <YellowDot />
                    <SmallArrow $dir="r" />
                    <IconSlot $ml={-3}><Timer size={9} /></IconSlot>
                  </PropIcons>
                  <PropLabel $on>Position</PropLabel>
                </TLLeft>
                <TLRight>
                  <Lane>
                    <Diamond $x={0} />
                    <Diamond $x={445} $hollow />
                    <Diamond $x={872} $hollow />
                  </Lane>
                </TLRight>
              </TLRow>
              <TLRow $h={13} $line>
                <TLLeft>
                  <PropIcons><Timer size={9} /></PropIcons>
                  <PropLabel>Opacity</PropLabel>
                </TLLeft>
                <TLRight><Lane /></TLRight>
              </TLRow>
              <TLRow $h={13} $line>
                <TLLeft>
                  <PropIcons><Timer size={9} /></PropIcons>
                  <PropLabel>Style</PropLabel>
                </TLLeft>
                <TLRight><Lane /></TLRight>
              </TLRow>
              <TLRow $h={18} $line>
                <TLLeft>
                  <AudioLabel>Audio Track</AudioLabel>
                  <AudioIcons>
                    <Volume1 size={10} fill="currentColor" />
                    <Music size={10} />
                    <IconSlot $ml={-4}><ChevronDown size={6} /></IconSlot>
                  </AudioIcons>
                </TLLeft>
                <TLRight>
                  <Lane $blank />
                  <PlusCell><Plus size={10} strokeWidth={2} /></PlusCell>
                </TLRight>
              </TLRow>
              <TLRow $h={13} />
              <BottomBar>
                <Squares />
                <IconSlot $ml={9}>
                  <svg width="10" height="9" viewBox="0 0 10 9" fill="#999">
                    <path d="M6 0l4 3.500L6 7V5C3 5 2 6 0 8c0-4 2-6 6-6z" />
                  </svg>
                </IconSlot>
                <TimeCode>0;00;02;02</TimeCode>
                <FpsText>(33.79 fps)</FpsText>
                <Mountain $w={9} $ml={15.5} />
                <ZoomTrack><ZoomThumb /></ZoomTrack>
                <Mountain $w={13} $ml={7.5} />
                <IconSlot $ml={7}><ChevronLeft size={7} /></IconSlot>
                <HScroll />
                <ScrollEnd><ChevronRight size={7} /></ScrollEnd>
              </BottomBar>
              <Playhead><PlayKnob /></Playhead>
              <CursorHand>
                <Hand size={12} fill="#fff" strokeWidth={1} />
              </CursorHand>
            </TimelineBody>
          </Timeline>
        </Center>

        <Dock>
          <DockCol $w={26}>
            <DockHead><ChevronsLeft size={6} /></DockHead>
            <DockGroup $h={28}>
              <DockIcon><HistoryIcon /></DockIcon>
            </DockGroup>
            <DockGroup $h={26}>
              <DockIcon $active><Layers size={12} fill="currentColor" /></DockIcon>
            </DockGroup>
          </DockCol>
          <DockCol $w={76}>
            <DockHead><ChevronsLeft size={6} /></DockHead>
            <DockGroup $h={45}>
              <DockEntry><Palette size={13} fill="#999" />Color</DockEntry>
              <DockEntry><SwatchIcon />Swatches</DockEntry>
            </DockGroup>
            <DockGroup $h={65} $pt={7}>
              <DockEntry><PropertiesIcon />Properties</DockEntry>
              <DockEntry><AdjustIcon />Adjustments</DockEntry>
              <DockEntry><StylesIcon />Styles</DockEntry>
            </DockGroup>
            <DockGroup $h={27} $pt={7}>
              <DockEntry><ChannelsIcon />Channels</DockEntry>
            </DockGroup>
          </DockCol>
          <DockCol>
            <DockHead><ChevronsLeft size={6} /></DockHead>
            <DockGroup $h={28}>
              <DockEntry $pad={6}><Lightbulb size={13} strokeWidth={1.3} />Learn</DockEntry>
            </DockGroup>
          </DockCol>
        </Dock>
      </Workspace>

      <Toast>
        <Grip />
        <ToastText>Screencastify - Screen Video Recorder is sharing your screen.</ToastText>
        <StopBtn>Stop sharing</StopBtn>
        <HideLink>Hide</HideLink>
      </Toast>

      <Taskbar>
        <TaskSlot><WindowsLogo /></TaskSlot>
        <TaskSlot><TaskSearch size={14} /></TaskSlot>
        <TaskSlot><TaskView /></TaskSlot>
        <TaskSlot $running><Explorer /></TaskSlot>
        <TaskSlot $running><OfficeTile bg="#1e7145" letter="X" /></TaskSlot>
        <TaskSlot $running><OfficeTile bg="#2b5797" letter="W" /></TaskSlot>
        <TaskSlot><Sticky /></TaskSlot>
        <TaskSlot $running><Outlook /></TaskSlot>
        <TaskSlot><IeLogo /></TaskSlot>
        <TaskSlot $running><RedApp /></TaskSlot>
        <TaskSlot $running><ChromeBall /></TaskSlot>
        <TaskSlot $running><DocFile arrow /></TaskSlot>
        <TaskSlot $running><DocFile /></TaskSlot>
        <TaskSlot $running><Snip /></TaskSlot>
        <TaskSlot $running $active><PsMark $task>Ps</PsMark></TaskSlot>
        <Tray>
          <Users size={11} />
          <IconSlot $ml={10}><ChevronUp size={10} /></IconSlot>
          <Clock>
            9:22 AM
            <br />
            1/30/2019
          </Clock>
          <Notify>
            <MessageSquare size={13} fill="currentColor" />
            <NotifyBadge>3</NotifyBadge>
          </Notify>
        </Tray>
      </Taskbar>
    </Page>
  );
}
